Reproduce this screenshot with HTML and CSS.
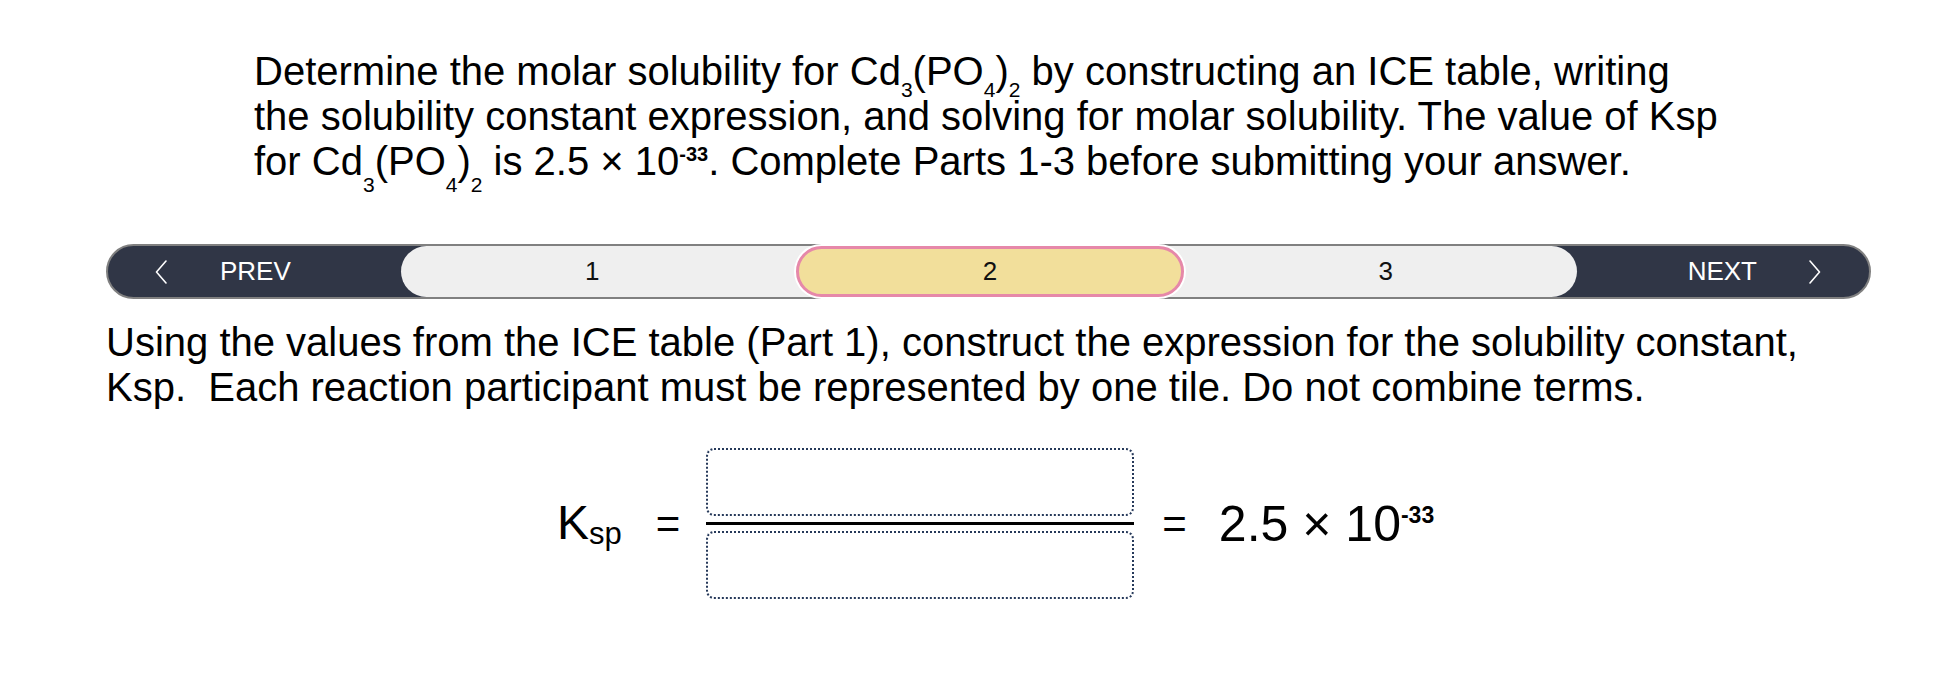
FILE: index.html
```html
<!DOCTYPE html>
<html lang="en">
<head>
<meta charset="utf-8">
<title>Molar solubility – Part 2</title>
<link rel="stylesheet" href="styles.css">
</head>
<body>
<main class="page">
  <p class="intro">Determine the molar solubility for Cd<span class="sub">3</span>(PO<span class="sub">4</span>)<span class="sub">2</span> by constructing an ICE table, writing<br>the solubility constant expression, and solving for molar solubility. The value of Ksp<br>for Cd<span class="sub sub-low">3</span>(PO<span class="sub sub-low">4</span>)<span class="sub sub-low">2</span> is 2.5 × 10<span class="sup">-33</span>. Complete Parts 1-3 before submitting your answer.</p>

  <nav class="stepper">
    <div class="step-nav step-prev">
      <svg class="chev" viewBox="0 0 12 24" aria-hidden="true"><polyline points="11,1 1.5,12 11,23" fill="none" stroke="#fff" stroke-width="1.6" stroke-linecap="round" stroke-linejoin="round"/></svg>
      <span>PREV</span>
    </div>
    <div class="steps">
      <div class="step">1</div>
      <div class="step step-active">2</div>
      <div class="step">3</div>
    </div>
    <div class="step-nav step-next">
      <span>NEXT</span>
      <svg class="chev" viewBox="0 0 12 24" aria-hidden="true"><polyline points="1,1 10.5,12 1,23" fill="none" stroke="#fff" stroke-width="1.6" stroke-linecap="round" stroke-linejoin="round"/></svg>
    </div>
  </nav>

  <p class="instructions">Using the values from the ICE table (Part 1), construct the expression for the solubility constant,<br>Ksp.&nbsp; Each reaction participant must be represented by one tile. Do not combine terms.</p>

  <div class="formula">
    <span class="ksp">K<span class="ksp-sub">sp</span></span>
    <span class="eq">=</span>
    <div class="frac">
      <div class="tile"></div>
      <div class="bar"></div>
      <div class="tile"></div>
    </div>
    <span class="eq eq-right">=</span>
    <span class="value">2.5 × 10<span class="sup sup-big">-33</span></span>
  </div>
</main>
</body>
</html>
```

FILE: styles.css
```css
* {
  box-sizing: border-box;
}

html, body {
  margin: 0;
  padding: 0;
  background: #ffffff;
}

body {
  width: 1958px;
  height: 678px;
  overflow: hidden;
  color: #000000;
  font-family: "Liberation Sans", Arial, sans-serif;
}

.page {
  padding-top: 49px;
}

.intro {
  margin: 0 0 0 254px;
  font-size: 40px;
  line-height: 45px;
}

.sub {
  display: inline-block;
  height: 0;
  font-size: 21px;
  line-height: 1;
  vertical-align: -12px;
}

.sub-low {
  vertical-align: -17px;
}

.sup {
  font-size: 20px;
  font-weight: bold;
  line-height: 0;
  vertical-align: 14px;
}

/* Stepper */
.stepper {
  display: flex;
  width: 1765px;
  height: 55px;
  margin: 60px 0 0 106px;
  border: 2px solid #808080;
  border-radius: 28px;
  background: #303646;
}

.step-nav {
  display: flex;
  align-items: center;
  width: 293px;
  color: #ffffff;
  font-size: 26px;
}

.step-prev {
  padding-left: 47px;
  gap: 53px;
}

.step-next {
  width: 292px;
  justify-content: flex-end;
  padding-right: 48px;
  gap: 52px;
}

.chev {
  width: 12px;
  height: 24px;
  display: block;
}

.steps {
  flex: 1;
  display: flex;
  background: #efefef;
  border-radius: 26px;
}

.step {
  flex: 1;
  display: flex;
  align-items: center;
  justify-content: center;
  font-size: 26px;
  color: #111111;
}

.step:first-child {
  padding-right: 8px;
}

.step:last-child {
  padding-left: 6px;
}

.step-active {
  margin: 0 4px;
  background: #f2df9b;
  border: 3px solid #e688a9;
  border-radius: 26px;
  box-shadow: 0 0 0 2px #ffffff;
}

/* Instructions */
.instructions {
  margin: 21px 0 0 106px;
  font-size: 40px;
  line-height: 45px;
}

/* Formula */
.formula {
  display: flex;
  align-items: center;
  margin: 38px 0 0 557px;
  font-size: 48px;
}

.ksp-sub {
  font-size: 31px;
  vertical-align: -5px;
}

.eq {
  margin-left: 34px;
  font-size: 42px;
}

.frac {
  display: flex;
  flex-direction: column;
  gap: 6px;
  width: 428px;
  margin-left: 26px;
}

.tile {
  height: 68px;
  border: 2px dotted #26395a;
  border-radius: 8px;
}

.bar {
  height: 3px;
  background: #000000;
}

.eq-right {
  margin-left: 28px;
}

.value {
  margin-left: 32px;
  font-size: 50px;
}

.sup-big {
  font-size: 23px;
  vertical-align: 18px;
}
```
